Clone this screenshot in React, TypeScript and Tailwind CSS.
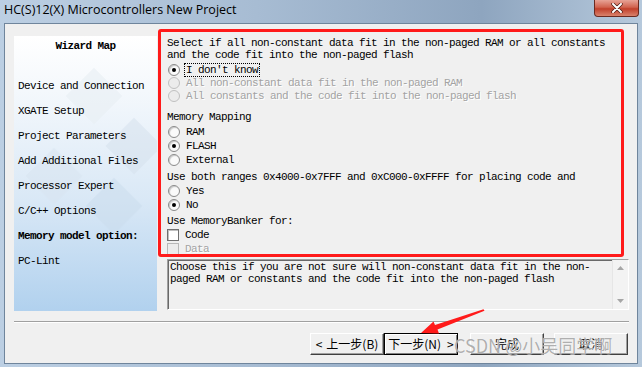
import React from 'react';

const mono = "[font-family:'Liberation_Mono','Courier_New',monospace] text-[11px] tracking-[-0.6px] leading-[12px]";

function Radio({ checked, disabled, label, focus }: { checked?: boolean; disabled?: boolean; label: string; focus?: boolean }) {
  return (
    <div className="flex items-center h-[14px]">
      <span
        className={
          'ml-[1px] w-[12px] h-[12px] rounded-full border flex items-center justify-center shrink-0 ' +
          (disabled ? 'border-[#c0c0c0] bg-[#ececec]' : 'border-[#8a8a8a] bg-[#fafafa] shadow-[inset_1px_1px_1px_#c8c8c8]')
        }
      >
        {checked && <span className="w-[4px] h-[4px] rounded-full bg-black" />}
      </span>
      <span
        className={
          'ml-[5px] px-[1px] ' +
          (focus ? 'outline outline-1 outline-dotted outline-black ' : '') +
          (disabled ? 'text-[#a3a3a3] [text-shadow:1px_1px_0_#ffffff]' : 'text-black')
        }
      >
        {label}
      </span>
    </div>
  );
}

function Check({ disabled, label }: { disabled?: boolean; label: string }) {
  return (
    <div className="flex items-center h-[14px]">
      <span
        className={
          'w-[12px] h-[12px] border shrink-0 ' +
          (disabled ? 'border-[#b8b8b8] bg-[#ececec]' : 'border-[#707070] bg-white shadow-[inset_1px_1px_0_#c0c0c0]')
        }
      />
      <span className={'ml-[6px] ' + (disabled ? 'text-[#a3a3a3] [text-shadow:1px_1px_0_#ffffff]' : 'text-black')}>{label}</span>
    </div>
  );
}

function Btn({ children, def }: { children: React.ReactNode; def?: boolean }) {
  return (
    <div
      className={
        "w-[74px] h-[22px] flex items-center justify-center bg-[#f0f0f0] text-[12px] text-black [font-family:'Noto_Sans_CJK_SC',sans-serif] " +
        (def
          ? 'border border-black shadow-[inset_1px_1px_0_#ffffff,inset_-1px_-1px_0_#808080]'
          : 'border border-t-white border-l-white border-b-[#404040] border-r-[#404040] shadow-[inset_-1px_-1px_0_#a0a0a0]')
      }
    >
      {children}
    </div>
  );
}

export default function App() {
  const wizard = [
    'Device and Connection',
    'XGATE Setup',
    'Project Parameters',
    'Add Additional Files',
    'Processor Expert',
    'C/C++ Options',
    'Memory model option:',
    'PC-Lint',
  ];

  return (
    <div className="relative w-[642px] h-[367px] overflow-hidden flex flex-col bg-[linear-gradient(90deg,#bccfe3_0%,#a7bcd3_40%,#8ea5bf_75%,#b6c9dc_100%)]">
      {/* title bar */}
      <div className="h-[23px] flex items-start shrink-0">
        <span className="ml-[4px] mt-[1px] text-[12.5px] text-black [font-family:'Open_Sans','Noto_Sans',sans-serif] leading-[18px]">
          HC(S)12(X) Microcontrollers New Project
        </span>
        <div className="ml-auto mr-[3px] w-[45px] h-[17px] rounded-b-[4px] border border-[#6b2a20] border-t-0 bg-[linear-gradient(180deg,#e7a396_0%,#d1634f_45%,#c1402b_55%,#d9826c_100%)] flex items-center justify-center">
          <svg width="12" height="10" viewBox="0 0 12 10">
            <path d="M2 1 L10 9 M10 1 L2 9" stroke="#4a1a12" strokeWidth="3.4" strokeLinecap="round" />
            <path d="M2 1 L10 9 M10 1 L2 9" stroke="#ffffff" strokeWidth="2" strokeLinecap="round" />
          </svg>
        </div>
      </div>

      {/* client area */}
      <div className="flex-1 mx-[4px] mb-[3px] bg-[#f0f0f0] border border-[#6f859c] flex flex-col pl-[9px] pr-[8px] pt-[12px]">
        <div className="flex gap-[10px]">
          {/* wizard map */}
          <div className="w-[143px] h-[275px] shrink-0 bg-[linear-gradient(180deg,#ffffff_0%,#f4f8fc_20%,#d9e8f6_60%,#b1d1ee_100%)] relative overflow-hidden">
            <div className="absolute left-[60px] top-[40px] w-[40px] h-[40px] rotate-45 bg-[#e8eef4]/60" />
            <div className="absolute left-[100px] top-[90px] w-[40px] h-[40px] rotate-45 bg-[#d4e0ec]/50" />
            <div className="absolute left-[20px] top-[120px] w-[40px] h-[40px] rotate-45 bg-[#d8e4f0]/50" />
            <div className="absolute left-[80px] top-[150px] w-[40px] h-[40px] rotate-45 bg-[#c9dbeb]/50" />
            <div className={'relative ' + mono}>
              <div className="h-[20px] pt-[4px] text-center font-bold text-black">Wizard Map</div>
              <div className="pt-[24px] flex flex-col">
                {wizard.map((w) => (
                  <div key={w} className={'h-[25px] pl-[4px] text-black whitespace-nowrap ' + (w.startsWith('Memory') ? 'font-bold' : '')}>
                    {w}
                  </div>
                ))}
              </div>
            </div>
          </div>

          {/* options */}
          <div className={'flex-1 flex flex-col ' + mono}>
            <div className="h-[223px] pt-[1px] text-black">
              <div>Select if all non-constant data fit in the non-paged RAM or all constants</div>
              <div>and the code fit into the non-paged flash</div>
              <div className="mt-[2px] flex flex-col [&>div]:h-[13px]">
                <Radio checked focus label="I don't know" />
                <Radio disabled label="All non-constant data fit in the non-paged RAM" />
                <Radio disabled label="All constants and the code fit into the non-paged flash" />
              </div>
              <div className="mt-[9px]">Memory Mapping</div>
              <div className="mt-[2px]">
                <Radio label="RAM" />
                <Radio checked label="FLASH" />
                <Radio label="External" />
              </div>
              <div className="mt-[4px] whitespace-nowrap">Use both ranges 0x4000-0x7FFF and 0xC000-0xFFFF for placing code and</div>
              <div className="mt-[1px]">
                <Radio label="Yes" />
                <Radio checked label="No" />
              </div>
              <div className="mt-[3px]">Use MemoryBanker for:</div>
              <div className="mt-[1px]">
                <Check label="Code" />
                <Check disabled label="Data" />
              </div>
            </div>

            {/* description */}
            <div className="h-[51px] flex border border-t-[#a0a0a0] border-l-[#a0a0a0] border-b-white border-r-white bg-[#f0f0f0] shadow-[inset_1px_1px_0_#696969]">
              <div className="flex-1 pl-[2px] pt-[1px] text-black">
                <div>Choose this if you are not sure will non-constant data fit in the non-</div>
                <div>paged RAM or constants and the code fit into the non-paged flash</div>
              </div>
              <div className="w-[16px] flex flex-col items-center justify-between py-[6px] bg-[#f3f3f3] border-l border-[#e6e6e6]">
                <svg width="7" height="4" viewBox="0 0 7 4"><path d="M0 4 L3.5 0 L7 4 Z" fill="#a6a6a6" /></svg>
                <svg width="7" height="4" viewBox="0 0 7 4"><path d="M0 0 L3.5 4 L7 0 Z" fill="#a6a6a6" /></svg>
              </div>
            </div>
          </div>
        </div>

        {/* separator */}
        <div className="mt-[10px] h-[2px] border-t border-[#a0a0a0] border-b border-b-white" />

        {/* buttons */}
        <div className="mt-[10px] flex justify-end pr-[1px]">
          <Btn>
            <span className="mr-[4px]">&lt;</span>上一步(B)
          </Btn>
          <Btn def>
            下一步(N)<span className="ml-[6px]">&gt;</span>
          </Btn>
          <div className="w-[12px]" />
          <Btn>完成</Btn>
          <div className="w-[10px]" />
          <Btn>取消</Btn>
        </div>
      </div>

      {/* red annotation box */}
      <div className="absolute left-[158px] top-[29px] w-[466px] h-[228px] border-[3px] border-[#ff1a1a] rounded-[3px]" />

      {/* red arrow */}
      <svg className="absolute left-0 top-0" width="642" height="367" viewBox="0 0 642 367">
        <polygon points="421,333 439,333.5 437.5,329.5 484.5,310.8 483.5,309.2 435,325 433.5,321.5" fill="#ff1a1a" />
      </svg>

      {/* watermark */}
      <div className="absolute left-[454px] top-[334px] text-[18px] leading-[22px] text-[#8c8c8c]/70 [font-family:'Noto_Sans_CJK_SC',sans-serif] [text-shadow:0_0_1px_#ffffff] whitespace-nowrap pointer-events-none">
        CSDN @小吴同学啊
      </div>
    </div>
  );
}
